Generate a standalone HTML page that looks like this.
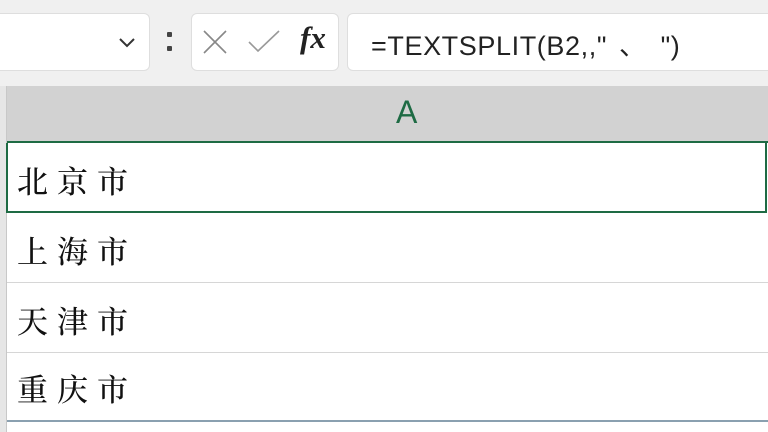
<!DOCTYPE html>
<html><head><meta charset="utf-8"><style>
body{margin:0;width:768px;height:432px;overflow:hidden;background:#fff;position:relative;font-family:"Liberation Sans","Noto Sans CJK SC",sans-serif}
.top{position:absolute;left:0;top:0;width:768px;height:86px;background:#f0f0f0}
.box{position:absolute;background:#fff;border:1px solid #dedede;border-radius:6px;top:13px;height:56px}
.hdr{position:absolute;left:7px;top:86px;width:761px;height:55px;background:#d2d2d2;border-bottom:1px solid #b5b5b5}
.rh{position:absolute;left:0;top:86px;width:6px;height:346px;background:#e6e6e6;border-right:1px solid #c8c8c8}
.row{position:absolute;left:7px;width:761px;border-bottom:1px solid #d6d6d6}
.c{position:absolute;left:17px;font-family:"Noto Serif CJK SC","Liberation Serif",serif;font-size:31px;letter-spacing:9px;color:#111;font-weight:500}
</style></head><body>
<div class="top"></div>
<div class="box" style="left:-8px;width:156px"></div>
<svg style="position:absolute;left:117px;top:36px" width="20" height="14"><path d="M3 3 L10 10 L17 3" stroke="#333" stroke-width="2" fill="none"/></svg>
<div style="position:absolute;left:167px;top:32px;width:5px;height:5px;background:#444;border-radius:1px"></div>
<div style="position:absolute;left:167px;top:46px;width:5px;height:5px;background:#444;border-radius:1px"></div>
<div class="box" style="left:191px;width:146px"></div>
<svg style="position:absolute;left:200px;top:28px" width="30" height="28"><path d="M4 3 L26 25 M26 3 L4 25" stroke="#888" stroke-width="1.6" fill="none"/></svg>
<svg style="position:absolute;left:246px;top:28px" width="36" height="28"><path d="M3 14 L12 23 L33 3" stroke="#999" stroke-width="1.6" fill="none"/></svg>
<div style="position:absolute;left:300px;top:20px;font-family:'Liberation Serif',serif;font-style:italic;font-weight:bold;font-size:31px;color:#222">fx</div>
<div class="box" style="left:347px;width:440px"></div>
<div style="position:absolute;left:371px;top:24px;font-size:27px;letter-spacing:0.6px;color:#222">=TEXTSPLIT(B2,,"<span style="font-family:'Noto Sans CJK SC',sans-serif;margin:0 14px 0 12px">、</span>")</div>
<div class="rh"></div>
<div class="hdr"></div>
<div style="position:absolute;left:396px;top:94px;font-size:32px;color:#1e6b44">A</div>
<div style="position:absolute;left:7px;top:141px;width:761px;height:2px;background:#1e6b44"></div>
<div style="position:absolute;left:6px;top:143px;width:757px;height:68px;border:2px solid #1e6b44;border-top:none"></div>
<div class="row" style="top:213px;height:69px"></div>
<div class="row" style="top:283px;height:69px"></div>
<div class="row" style="top:353px;height:67px;border-bottom:2px solid #8aa0b0"></div>
<div class="c" style="top:157px">北京市</div>
<div class="c" style="top:227px">上海市</div>
<div class="c" style="top:297px">天津市</div>
<div class="c" style="top:365px">重庆市</div>
</body></html>
